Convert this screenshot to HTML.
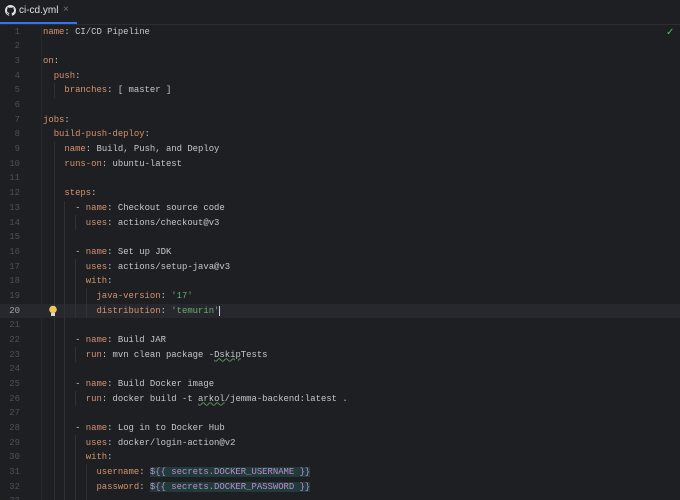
<!DOCTYPE html>
<html><head><style>
html,body{margin:0;width:680px;height:500px;background:#1e1f22;overflow:hidden;position:relative;font-family:"Liberation Mono",monospace}
.tabbar{position:absolute;left:0;top:0;width:680px;height:24px;background:#1e1f22;border-bottom:1px solid #2b2d30}
.tab{position:absolute;left:0;top:0;width:77px;height:24px;font-family:"Liberation Sans",sans-serif;font-size:10px;color:#dfe1e5}
.tab .u{position:absolute;left:0;bottom:0;height:2px;background:#3574f0}
.code{position:absolute;left:0;top:24.7px;width:680px;font-size:8.92px;line-height:14.68px;white-space:pre;color:#c4c6cc}
.ln{position:absolute;left:0;width:20px;text-align:right;color:#4b5059}
.tx{position:absolute;left:43px}
.k{color:#d4936f}.s{color:#6aab73}.t{color:#b98ccf;background:#213b3b}
.cur{position:absolute;left:0;width:680px;height:14.68px;background:#26282e;top:303.6px}
.g{position:absolute;width:1px;background:#2f3136}
</style></head><body>
<div class="tabbar"><div class="tab">
<svg style="position:absolute;left:5px;top:5px" width="11" height="11" viewBox="0 0 16 16"><path fill="#dfe1e5" d="M8 0C3.58 0 0 3.58 0 8c0 3.54 2.290 6.530 5.470 7.590.4.07.55-.17.55-.38v-1.330c-2.230.48-2.700-1.070-2.700-1.070-.36-.92-.89-1.170-.89-1.170-.73-.5.05-.49.05-.49.8.06 1.230.83 1.230.83.72 1.220 1.870.87 2.330.66.07-.52.28-.87.5-1.070-1.780-.2-3.640-.89-3.640-3.960 0-.87.31-1.590.82-2.150-.08-.2-.36-1.020.08-2.120 0 0 .67-.21 2.200.82A7.600 7.600 0 0 1 8 3.860c.68 0 1.360.09 2 .27 1.530-1.040 2.200-.82 2.200-.82.44 1.100.16 1.920.08 2.120.51.56.82 1.280.82 2.150 0 3.080-1.870 3.750-3.650 3.950.29.25.54.73.54 1.480v2.200c0 .21.15.46.55.38A8 8 0 0 0 16 8c0-4.420-3.580-8-8-8z"/></svg>
<span style="position:absolute;left:19px;top:5px">ci-cd.yml</span>
<span style="position:absolute;left:63px;top:4px;color:#6f737a;font-size:10px">×</span>
<div class="u" style="width:77px"></div></div></div>
<div class="cur"></div>
<div class="g" style="left:41px;top:24px;height:476px;background:#26282c"></div>
<div class="g" style="left:54px;top:83px;height:15px"></div>
<div class="g" style="left:54px;top:142px;height:358px"></div>
<div class="g" style="left:64px;top:201px;height:299px"></div>
<div class="g" style="left:75px;top:215px;height:15px"></div>
<div class="g" style="left:75px;top:259px;height:59px"></div>
<div class="g" style="left:86px;top:288px;height:30px"></div>
<div class="g" style="left:75px;top:347px;height:15px"></div>
<div class="g" style="left:75px;top:391px;height:15px"></div>
<div class="g" style="left:75px;top:435px;height:65px"></div>
<div class="g" style="left:86px;top:464px;height:36px"></div>
<svg style="position:absolute;left:48px;top:305px" width="10" height="12" viewBox="0 0 10 12"><circle cx="5" cy="4.5" r="3.8" fill="#f2c55c"/><rect x="3" y="8" width="4" height="3" fill="#d9d9d9"/></svg>
<span style="position:absolute;left:666px;top:27px;color:#5fb865;font-size:10px;font-family:'DejaVu Sans',sans-serif">✓</span>
<div class="code">
<div class="ln" style="top:0">1</div><div class="tx" style="top:0"><span class="k">name</span>: CI/CD Pipeline</div>
<div class="ln" style="top:14.68px">2</div>
<div class="ln" style="top:29.36px">3</div><div class="tx" style="top:29.36px"><span class="k">on</span>:</div>
<div class="ln" style="top:44.04px">4</div><div class="tx" style="top:44.04px">  <span class="k">push</span>:</div>
<div class="ln" style="top:58.72px">5</div><div class="tx" style="top:58.72px">    <span class="k">branches</span>: [ master ]</div>
<div class="ln" style="top:73.4px">6</div>
<div class="ln" style="top:88.08px">7</div><div class="tx" style="top:88.08px"><span class="k">jobs</span>:</div>
<div class="ln" style="top:102.76px">8</div><div class="tx" style="top:102.76px">  <span class="k">build-push-deploy</span>:</div>
<div class="ln" style="top:117.44px">9</div><div class="tx" style="top:117.44px">    <span class="k">name</span>: Build, Push, and Deploy</div>
<div class="ln" style="top:132.12px">10</div><div class="tx" style="top:132.12px">    <span class="k">runs-on</span>: ubuntu-latest</div>
<div class="ln" style="top:146.8px">11</div>
<div class="ln" style="top:161.48px">12</div><div class="tx" style="top:161.48px">    <span class="k">steps</span>:</div>
<div class="ln" style="top:176.16px">13</div><div class="tx" style="top:176.16px">      - <span class="k">name</span>: Checkout source code</div>
<div class="ln" style="top:190.84px">14</div><div class="tx" style="top:190.84px">        <span class="k">uses</span>: actions/checkout@v3</div>
<div class="ln" style="top:205.52px">15</div>
<div class="ln" style="top:220.2px">16</div><div class="tx" style="top:220.2px">      - <span class="k">name</span>: Set up JDK</div>
<div class="ln" style="top:234.88px">17</div><div class="tx" style="top:234.88px">        <span class="k">uses</span>: actions/setup-java@v3</div>
<div class="ln" style="top:249.56px">18</div><div class="tx" style="top:249.56px">        <span class="k">with</span>:</div>
<div class="ln" style="top:264.24px">19</div><div class="tx" style="top:264.24px">          <span class="k">java-version</span>: <span class="s">'17'</span></div>
<div class="ln" style="top:278.92px;color:#a1a3ab">20</div><div class="tx" style="top:278.92px">          <span class="k">distribution</span>: <span class="s">'temurin'</span><span style="border-left:1px solid #ced0d6"></span></div>
<div class="ln" style="top:293.6px">21</div>
<div class="ln" style="top:308.28px">22</div><div class="tx" style="top:308.28px">      - <span class="k">name</span>: Build JAR</div>
<div class="ln" style="top:322.96px">23</div><div class="tx" style="top:322.96px">        <span class="k">run</span>: mvn clean package -<span style="text-decoration:underline wavy #5f8c5f">Dskip</span>Tests</div>
<div class="ln" style="top:337.64px">24</div>
<div class="ln" style="top:352.32px">25</div><div class="tx" style="top:352.32px">      - <span class="k">name</span>: Build Docker image</div>
<div class="ln" style="top:367px">26</div><div class="tx" style="top:367px">        <span class="k">run</span>: docker build -t <span style="text-decoration:underline wavy #5f8c5f">arkol</span>/jemma-backend:latest .</div>
<div class="ln" style="top:381.68px">27</div>
<div class="ln" style="top:396.36px">28</div><div class="tx" style="top:396.36px">      - <span class="k">name</span>: Log in to Docker Hub</div>
<div class="ln" style="top:411.04px">29</div><div class="tx" style="top:411.04px">        <span class="k">uses</span>: docker/login-action@v2</div>
<div class="ln" style="top:425.72px">30</div><div class="tx" style="top:425.72px">        <span class="k">with</span>:</div>
<div class="ln" style="top:440.4px">31</div><div class="tx" style="top:440.4px">          <span class="k">username</span>: <span class="t">${{ secrets.DOCKER_USERNAME }}</span></div>
<div class="ln" style="top:455.08px">32</div><div class="tx" style="top:455.08px">          <span class="k">password</span>: <span class="t">${{ secrets.DOCKER_PASSWORD }}</span></div>
<div class="ln" style="top:469.76px">33</div>
</div>
</body></html>
